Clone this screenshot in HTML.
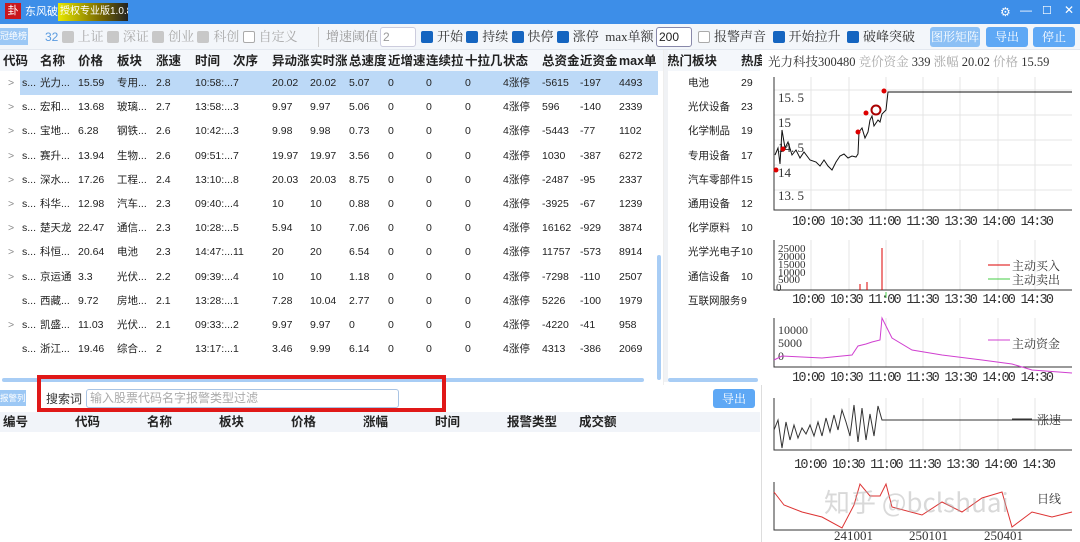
<!DOCTYPE html>
<html><head><meta charset="utf-8"><style>
*{margin:0;padding:0;box-sizing:border-box}
body{width:1080px;height:542px;overflow:hidden;background:#fff;font-family:"Liberation Sans","Noto Sans CJK SC",sans-serif;font-size:11px;color:#222;position:relative}
.abs{position:absolute;white-space:nowrap}
.title{left:0;top:0;width:1080px;height:24px;background:#3d8ee8}
.tb{left:0;top:24px;width:1080px;height:26px;background:#f3f6fa;border-bottom:1px solid #e3e8ef}
.cb{display:inline-block;width:12px;height:12px;border-radius:2px;vertical-align:-2px;margin-right:4px}
.cb.on{background:#1565c0}
.cb.dis{background:#c8c8c8}
.cb.off{border:1px solid #aaa;background:#fff}
.serif{font-family:"Liberation Serif","Noto Serif CJK SC",serif;font-size:13px}
.btn{background:#5ea8f5;color:#fff;border-radius:3px;text-align:center;font-family:"Noto Serif CJK SC",serif;font-size:12px}
.hdr{font-weight:bold;font-size:12.5px;line-height:16px;height:16px;overflow:hidden}
.row{left:0;width:658px;height:24px}
.c{position:absolute;top:5px;font-size:10.5px;line-height:14px;height:14px;overflow:hidden}
</style></head><body>
<div class="abs title">
 <div class="abs" style="left:5px;top:3px;width:16px;height:16px;background:#c8161d;color:#fff;font-size:11px;text-align:center;line-height:16px">卦</div>
 <div class="abs" style="left:25px;top:5px;color:#fff;font-size:11px;line-height:14px">东风破</div>
 <div class="abs" style="left:58px;top:3px;width:70px;height:18px;background:linear-gradient(90deg,#e8e800,#7a6b00 60%,#222);color:#fff;font-size:10px;line-height:14px;padding:2px 2px;overflow:hidden">授权专业版1.0.8</div>
 <div class="abs" style="left:1000px;top:5px;color:#fff;font-size:12px">⚙</div>
 <div class="abs" style="left:1020px;top:3px;color:#fff;font-size:12px">—</div>
 <div class="abs" style="left:1042px;top:4px;color:#fff;font-size:11px">☐</div>
 <div class="abs" style="left:1064px;top:3px;color:#fff;font-size:12px">✕</div>
</div>
<div class="abs tb">
 <div class="abs" style="left:0;top:4px;width:28px;height:17px;background:#9cc8f5;color:#fff;font-size:9px;line-height:17px;overflow:hidden">冠绝榜</div>
 <div class="abs serif" style="left:45px;top:5px;color:#aaa;line-height:16px"><span style="color:#5a9be0;font-family:Liberation Sans;font-size:12px">32</span> <span class="cb dis"></span>上证 <span class="cb dis"></span>深证 <span class="cb dis"></span>创业 <span class="cb dis"></span>科创 <span class="cb off"></span>自定义</div>
 <div class="abs" style="left:318px;top:3px;width:1px;height:20px;background:#ccc"></div>
 <div class="abs serif" style="left:326px;top:5px;color:#999;line-height:16px">增速阈值</div>
 <div class="abs" style="left:380px;top:3px;width:36px;height:20px;border:1px solid #ccd;border-radius:3px;background:#fff;color:#999;font-size:12px;padding:2px;line-height:14px">2</div>
 <div class="abs serif" style="left:421px;top:5px;color:#333;line-height:16px"><span class="cb on"></span>开始 <span class="cb on"></span>持续 <span class="cb on"></span>快停 <span class="cb on"></span>涨停 &nbsp;max单额</div>
 <div class="abs" style="left:656px;top:3px;width:36px;height:20px;border:1px solid #88a;border-radius:3px;background:#fff;font-size:12px;padding:2px;line-height:14px">200</div>
 <div class="abs serif" style="left:698px;top:5px;color:#333;line-height:16px"><span class="cb off"></span>报警声音 &nbsp;<span class="cb on"></span>开始拉升 &nbsp;<span class="cb on"></span>破峰突破</div>
 <div class="abs btn" style="left:930px;top:3px;width:50px;height:20px;line-height:20px;background:#8cc0f5;overflow:hidden">图形矩阵</div>
 <div class="abs btn" style="left:986px;top:3px;width:42px;height:20px;line-height:20px">导出</div>
 <div class="abs btn" style="left:1033px;top:3px;width:42px;height:20px;line-height:20px">停止</div>
</div>
<div class="abs" style="left:0;top:50px;width:760px;height:21px;background:#f4f7fb"></div>
<div id="hd"></div>
<div class="abs" style="left:0;top:50px;width:664px;height:335px;border-right:1px solid #eee"></div>
<div class="abs" style="left:20px;top:71px;width:638px;height:24px;background:#bcd9f7"></div>
<div id="rows"></div>
<script>
var H=[["代码",3],["名称",40],["价格",78],["板块",117],["涨速",156],["时间",195],["次序",233],["异动涨",272],["实时涨",310],["总速度",349],["近增速",388],["连续拉",426],["十拉几",465],["状态",503],["总资金",542],["近资金",580],["max单",619]];
var g="";H.forEach(function(a){g+='<div class="abs hdr" style="left:'+a[1]+'px;top:53px;width:37px">'+a[0]+'</div>';});
g+='<div class="abs hdr" style="left:667px;top:53px">热门板块</div><div class="abs hdr" style="left:741px;top:53px;width:21px">热度</div>';
document.getElementById("hd").innerHTML=g;
var d=[["光力...","15.59","专用...","2.8","10:58:...","7","20.02","20.02","5.07","-5615","-197","4493",1],
["宏和...","13.68","玻璃...","2.7","13:58:...","3","9.97","9.97","5.06","596","-140","2339",1],
["宝地...","6.28","钢铁...","2.6","10:42:...","3","9.98","9.98","0.73","-5443","-77","1102",1],
["赛升...","13.94","生物...","2.6","09:51:...","7","19.97","19.97","3.56","1030","-387","6272",1],
["深水...","17.26","工程...","2.4","13:10:...","8","20.03","20.03","8.75","-2487","-95","2337",1],
["科华...","12.98","汽车...","2.3","09:40:...","4","10","10","0.88","-3925","-67","1239",1],
["楚天龙","22.47","通信...","2.3","10:28:...","5","5.94","10","7.06","16162","-929","3874",1],
["科恒...","20.64","电池","2.3","14:47:...","11","20","20","6.54","11757","-573","8914",1],
["京运通","3.3","光伏...","2.2","09:39:...","4","10","10","1.18","-7298","-110","2507",1],
["西藏...","9.72","房地...","2.1","13:28:...","1","7.28","10.04","2.77","5226","-100","1979",0],
["凯盛...","11.03","光伏...","2.1","09:33:...","2","9.97","9.97","0","-4220","-41","958",1],
["浙江...","19.46","综合...","2","13:17:...","1","3.46","9.99","6.14","4313","-386","2069",0]];
var xs=[40,78,117,156,195,233,272,310,349];var h="";
d.forEach(function(r,i){var y=71+i*24.2;h+='<div class="abs row" style="top:'+y+'px">';
if(r[12])h+='<span class="c" style="left:8px;color:#888">&gt;</span>';
h+='<span class="c" style="left:22px">s...</span>';
for(var k=0;k<9;k++)h+='<span class="c" style="left:'+xs[k]+'px;width:37px">'+r[k]+'</span>';
h+='<span class="c" style="left:388px">0</span><span class="c" style="left:426px">0</span><span class="c" style="left:465px">0</span><span class="c" style="left:503px">4涨停</span><span class="c" style="left:542px">'+r[9]+'</span><span class="c" style="left:580px">'+r[10]+'</span><span class="c" style="left:619px">'+r[11]+'</span></div>';});
var s=[["电池",29],["光伏设备",23],["化学制品",19],["专用设备",17],["汽车零部件",15],["通用设备",12],["化学原料",10],["光学光电子",10],["通信设备",10],["互联网服务",9]];
s.forEach(function(r,i){var y=76+i*24.2;h+='<span class="abs" style="left:688px;top:'+y+'px;font-size:10.5px;line-height:14px">'+r[0]+'</span><span class="abs" style="left:741px;top:'+y+'px;font-size:10.5px;line-height:14px">'+r[1]+'</span>';});
document.getElementById("rows").innerHTML=h;
</script>
<div class="abs" style="left:657px;top:255px;width:4px;height:125px;background:#a8cdf5;border-radius:2px"></div>
<div class="abs" style="left:2px;top:378px;width:642px;height:4px;background:#a8cdf5;border-radius:2px"></div>
<div class="abs" style="left:668px;top:378px;width:90px;height:4px;background:#a8cdf5;border-radius:2px"></div>
<div class="abs" style="left:664px;top:50px;width:4px;height:332px;background:#f0f2f5"></div>
<div class="abs" style="left:0;top:385px;width:762px;height:157px;background:#fff;border-right:1px solid #ddd"></div>
<div class="abs" style="left:0;top:390px;width:26px;height:16px;background:#9cc8f5;color:#fff;font-size:8.5px;line-height:16px;overflow:hidden">报警列表</div>
<div class="abs" style="left:46px;top:391px;font-size:12px;line-height:16px;color:#333">搜索词</div>
<div class="abs" style="left:86px;top:389px;height:19px;border:1px solid #a9c4e4;border-radius:3px;color:#aaa;font-size:12px;line-height:16px;padding:0 3px;width:313px">输入股票代码名字报警类型过滤</div>
<div class="abs" style="left:37px;top:375px;width:409px;height:37px;border:4px solid #e01818"></div>
<div class="abs btn" style="left:713px;top:389px;width:42px;height:19px;line-height:19px">导出</div>
<div class="abs" style="left:0;top:412px;width:760px;height:20px;background:#f1f4f9"></div>
<div class="abs hdr" style="left:3px;top:414px">编号</div><div class="abs hdr" style="left:75px;top:414px">代码</div><div class="abs hdr" style="left:147px;top:414px">名称</div><div class="abs hdr" style="left:219px;top:414px">板块</div><div class="abs hdr" style="left:291px;top:414px">价格</div><div class="abs hdr" style="left:363px;top:414px">涨幅</div><div class="abs hdr" style="left:435px;top:414px">时间</div><div class="abs hdr" style="left:507px;top:414px">报警类型</div><div class="abs hdr" style="left:579px;top:414px">成交额</div>
<div class="abs serif" style="left:768px;top:54px;font-size:12.5px;line-height:16px;color:#333">光力科技300480 <span style="color:#aaa">竞价资金</span> 339 <span style="color:#aaa">涨幅</span> 20.02 <span style="color:#aaa">价格</span> 15.59</div>
<svg class="abs" style="left:762px;top:70px" width="318" height="472" font-family="Liberation Serif" font-size="13" fill="#333">
<g stroke="#e4e4e4" stroke-width="1">
<path d="M49 7V140M87 7V140M124 7V140M161 7V140M198 7V140M236 7V140M273 7V140M12 20H310M12 45H310M12 70H310M12 95H310M12 120H310"/>
<path d="M49 170V220M87 170V220M124 170V220M161 170V220M198 170V220M236 170V220M273 170V220"/>
<path d="M49 248V297M87 248V297M124 248V297M161 248V297M198 248V297M236 248V297M273 248V297"/>
<path d="M49 328V380M87 328V380M124 328V380M161 328V380M198 328V380M236 328V380M273 328V380"/>
</g>
<g stroke="#333" fill="none"><path d="M12 7V140H310M12 170V220H310M12 248V297H310M12 328V380H310M12 412V460H310"/></g>
<text x="16" y="32">15. 5</text><text x="16" y="57">15</text><text x="16" y="82">14. 5</text><text x="16" y="107">14</text><text x="16" y="130">13. 5</text>
<g font-size="13.5" font-family="Liberation Mono"><text x="30" y="155" textLength="262">10:00 10:30 11:00 11:30 13:30 14:00 14:30</text><text x="30" y="233" textLength="262">10:00 10:30 11:00 11:30 13:30 14:00 14:30</text><text x="30" y="311" textLength="262">10:00 10:30 11:00 11:30 13:30 14:00 14:30</text><text x="32" y="398" textLength="262">10:00 10:30 11:00 11:30 13:30 14:00 14:30</text></g>
<path fill="none" stroke="#111" d="M13 85 16 78 18 94 20 60 23 78 26 72 30 85 34 80 38 88 42 82 48 90 54 92 58 96 62 90 66 96 70 100 74 92 78 86 82 84 86 88 90 86 94 87 96 84 97 62 100 58 103 68 106 62 108 50 110 46 112 56 116 50 118 52 120 44 124 40 126 22 130 22 H310"/>
<g fill="#d00"><circle cx="14" cy="100" r="2.5"/><circle cx="21" cy="79" r="2.5"/><circle cx="96" cy="62" r="2.5"/><circle cx="104" cy="43" r="2.5"/><circle cx="122" cy="21" r="2.5"/></g>
<circle cx="114" cy="40" r="4.5" fill="none" stroke="#a00" stroke-width="2"/>
<g font-size="11"><text x="16" y="182">25000</text><text x="16" y="190">20000</text><text x="16" y="198">15000</text><text x="16" y="206">10000</text><text x="16" y="213">5000</text><text x="14" y="221">0</text></g>
<path stroke="#d00" d="M120 220V178M98 220V214M105 220V212"/><path stroke="#4c4" d="M124 222V228"/>
<path stroke="#d00" d="M226 195H248"/><path stroke="#4c4" d="M226 209H248"/>
<g font-family="Noto Serif CJK SC" font-size="12"><text x="250" y="200">主动买入</text><text x="250" y="214">主动卖出</text><text x="250" y="278">主动资金</text><text x="275" y="354">涨速</text><text x="275" y="433">日线</text></g>
<g font-size="12"><text x="16" y="264">10000</text><text x="16" y="277">5000</text><text x="16" y="290">0</text></g>
<path fill="none" stroke="#d040d0" d="M12 290 20 286 60 288 90 285 96 276 104 274 110 272 118 270 120 248 126 260 130 268 150 280 180 285 220 290 250 294 270 300 310 303"/>
<path stroke="#d040d0" d="M226 270H248"/>
<path stroke="#333" d="M250 349H270"/>
<path fill="none" stroke="#333" d="M12 360 16 350 20 378 24 352 28 370 32 355 36 368 40 358 44 364 48 355 52 366 56 352 60 366 64 348 68 362 72 345 76 360 80 340 84 352 88 366 92 335 96 372 100 338 104 370 108 344 112 366 116 336 120 350 H310"/>
<path fill="none" stroke="#d33" d="M12 422 22 435 40 442 60 447 80 458 92 435 98 414 108 426 118 426 124 414 130 437 160 445 180 432 200 442 220 428 240 422 250 457 270 442 290 447 310 442"/>
<g font-size="13"><text x="72" y="470">241001</text><text x="147" y="470">250101</text><text x="222" y="470">250401</text></g>
<text x="62" y="442" font-family="Noto Sans CJK SC" font-size="26" fill="rgba(170,170,170,0.45)">知乎 @bclshuai</text>
</svg>
</body></html>
